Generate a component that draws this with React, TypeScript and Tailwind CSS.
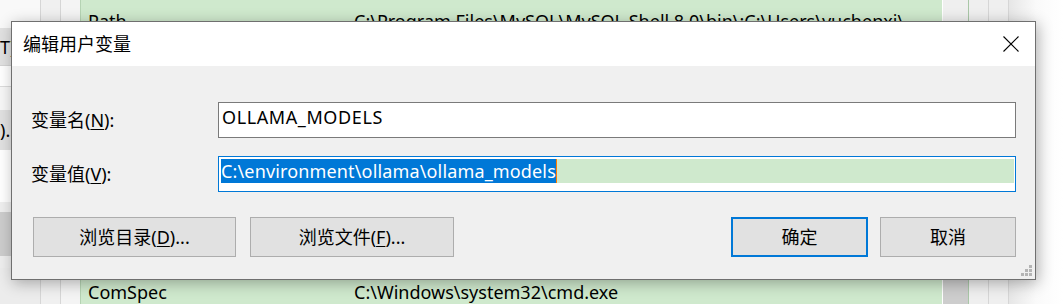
import React from "react";

const font = "font-['Noto_Sans','Noto_Sans_CJK_SC',sans-serif]";

function CloseIcon() {
  return (
    <svg width="16" height="16" viewBox="0 0 16 16">
      <path d="M0.5 0.5 L15.5 15.5 M15.5 0.5 L0.5 15.5" stroke="#000" strokeWidth="1.1" fill="none" />
    </svg>
  );
}

function Grip() {
  return (
    <svg width="12" height="12" viewBox="0 0 12 12" className="absolute right-[2px] bottom-[2px]">
      <g fill="#b4b4b4">
        <rect x="8" y="0" width="3" height="3" />
        <rect x="4" y="4" width="3" height="3" />
        <rect x="8" y="4" width="3" height="3" />
        <rect x="0" y="8" width="3" height="3" />
        <rect x="4" y="8" width="3" height="3" />
        <rect x="8" y="8" width="3" height="3" />
      </g>
    </svg>
  );
}

function Btn({ children, w, primary }: { children: React.ReactNode; w: string; primary?: boolean }) {
  return (
    <div
      className={`${w} h-[40px] flex items-center justify-center bg-[#e1e1e1] text-[18px] text-black ${
        primary ? "border-2 border-[#0078d7]" : "border border-[#adadad]"
      }`}
    >
      {children}
    </div>
  );
}

export default function App() {
  return (
    <div className={`relative w-[1063px] h-[304px] overflow-hidden bg-white ${font}`}>
      {/* window behind */}
      <div className="flex h-full">
        <div className="w-[40px] flex flex-col text-[18px] leading-none overflow-hidden">
          <div className="h-[28px] bg-[#f9f9f9]" />
          <div className="h-[38px] bg-[#e1e1e1] border-b border-[#d4d4d4] flex items-center">T)</div>
          <div className="h-[20px] bg-white" />
          <div className="h-[24px] bg-[#f7f7f7] border-t border-[#dcdcdc]" />
          <div className="h-[40px] bg-[#e1e1e1] flex items-center">)..</div>
          <div className="h-[52px] bg-white" />
          <div className="h-[10px] bg-[#efefef]" />
          <div className="h-[44px] bg-[#cdcdcd]" />
          <div className="h-[12px] bg-[#eeeeee]" />
          <div className="flex-1 bg-[#ececec]" />
        </div>
        <div className="w-[20px] bg-[#f0f0f0] border-l border-[#d6d6d6]" />
        <div className="w-[20px] bg-[#f4f4f4] border-l border-[#d6d6d6]" />
        <div className="w-[862px] bg-[#cfe9cd] border-l border-[#b5d3b3] flex flex-col justify-between text-[18px] text-black leading-[24px]">
          <div className="flex pt-[9px]">
            <span className="w-[273px] pl-[7px]">Path</span>
            <span className="whitespace-nowrap">C:\Program Files\MySQL\MySQL Shell 8.0\bin\;C:\Users\yuchenxi\</span>
          </div>
          <div className="flex">
            <span className="w-[273px] pl-[7px]">ComSpec</span>
            <span className="whitespace-nowrap">C:\Windows\system32\cmd.exe</span>
          </div>
        </div>
        <div className="w-[26px] bg-[#efefef] border-l border-white flex flex-col justify-end">
          <div className="h-[24px] bg-[#cdcdcd]" />
        </div>
        <div className="w-[20px] bg-[#efefef] border-l border-[#a9c7a7]" />
        <div className="w-[20px] bg-[#efefef] border-l border-[#d6d6d6]" />
        <div className="flex-1 border-l border-[#d6d6d6] bg-gradient-to-r from-[#e6e6e6] via-[#fafafa] to-white" />
      </div>

      {/* dialog */}
      <div className="absolute left-[11px] top-[21px] w-[1025px] h-[259px] border border-[#6f6f6f] bg-[#f0f0f0] shadow-[2px_3px_14px_rgba(0,0,0,0.3)] flex flex-col text-black">
        <div className="h-[44px] bg-white flex items-center justify-between pl-[11px] pr-[16px]">
          <span className="text-[18px]">编辑用户变量</span>
          <CloseIcon />
        </div>
        <div className="relative flex-1 px-[19px] pt-[36px]">
          <div className="flex items-center h-[36px]">
            <span className="w-[187px] text-[18px]">
              变量名(<u className="underline-offset-2">N</u>):
            </span>
            <div className="flex-1 h-[36px] bg-white border border-[#7a7a7a] pt-[2px] pl-[3px]">
              <div className="h-[24px] leading-[24px] text-[18px] tracking-[0.6px]">OLLAMA_MODELS</div>
            </div>
          </div>
          <div className="flex items-center h-[36px] mt-[18px]">
            <span className="w-[187px] text-[18px]">
              变量值(<u className="underline-offset-2">V</u>):
            </span>
            <div className="flex-1 h-[36px] bg-white border border-[#0078d7] pt-[2px] pl-[2px] pr-[1px]">
              <div className="h-[24px] flex text-[18px] leading-[24px]">
                <span className="bg-[#0078d7] text-white whitespace-nowrap tracking-[0.15px] border-r border-[#ff7b00]">C:\environment\ollama\ollama_models</span>
                <span className="flex-1 bg-[#cfe9cd]" />
              </div>
            </div>
          </div>
          <div className="flex mt-[25px] pl-[2px] gap-[14px]">
            <Btn w="w-[203px]">
              浏览目录(<u className="underline-offset-2">D</u>)...
            </Btn>
            <Btn w="w-[204px]">
              浏览文件(<u className="underline-offset-2">F</u>)...
            </Btn>
            <div className="flex-1" />
            <div className="flex gap-[12px]">
              <Btn w="w-[137px]" primary>
                确定
              </Btn>
              <Btn w="w-[136px]">取消</Btn>
            </div>
          </div>
          <Grip />
        </div>
      </div>
    </div>
  );
}
